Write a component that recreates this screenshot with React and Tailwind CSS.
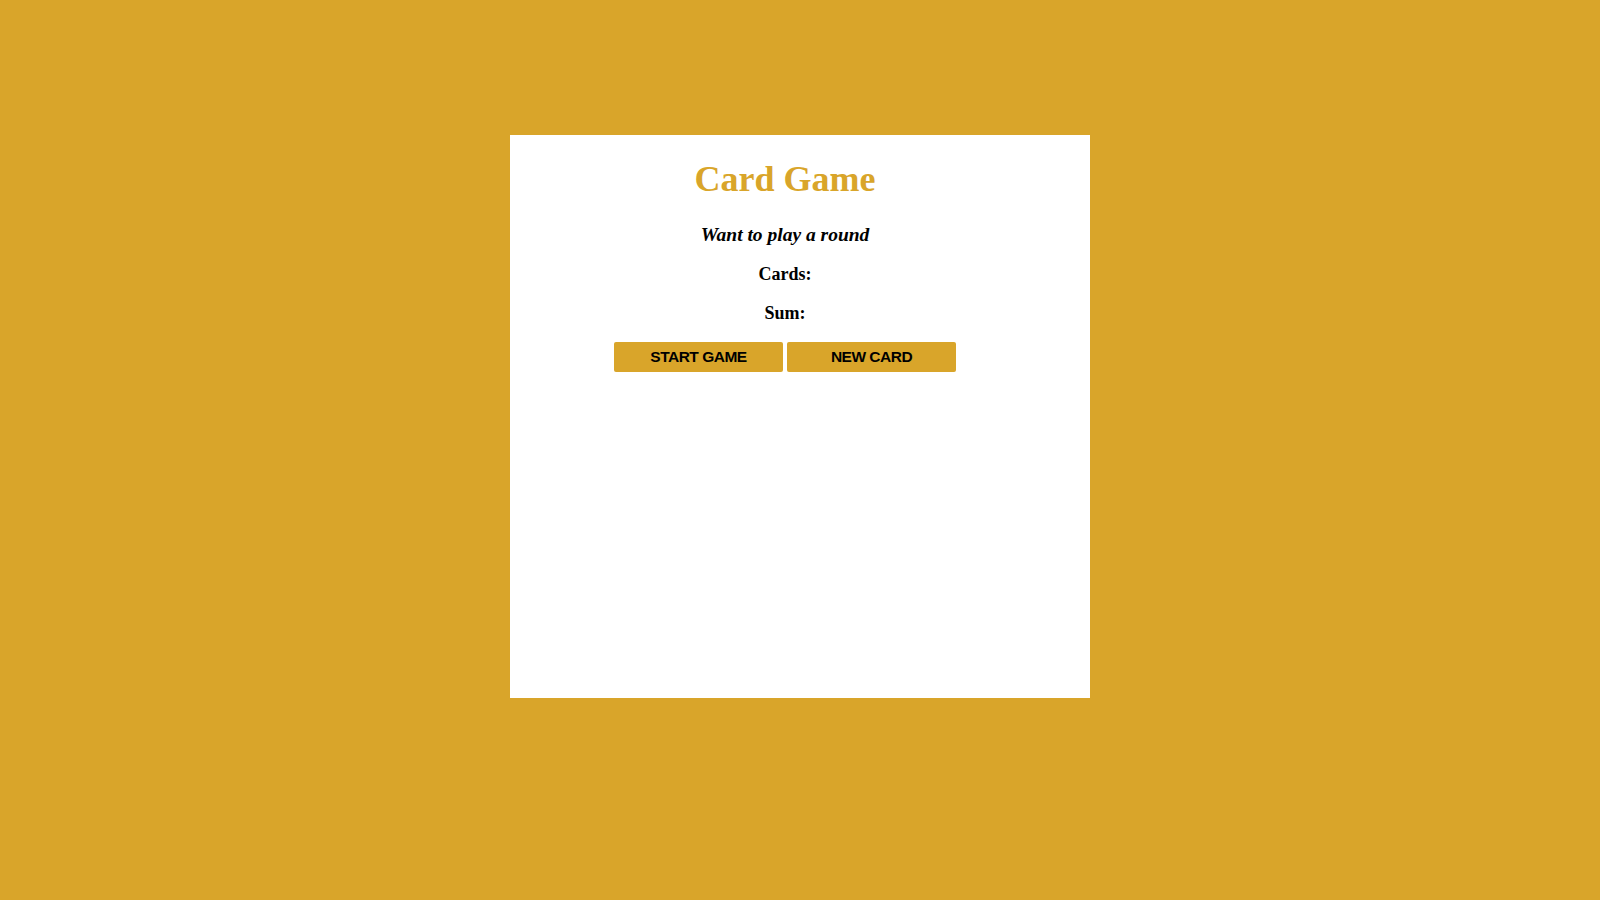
export default function App() {
  const serif = "font-['Liberation_Serif','Times_New_Roman',serif]"

  return (
    <div className="min-h-screen w-full bg-[#d9a52a] pt-[135px]">
      <main className={`mx-auto h-[563px] w-[580px] bg-white pr-[30px] pt-[26px] text-center ${serif}`}>
        <h1 className="text-[36px] font-bold leading-none text-[#d9a52a]">Card Game</h1>
        <p className="mt-[28px] text-[19.5px] font-bold italic leading-none text-black">Want to play a round</p>
        <p className="mt-[20px] text-[18px] font-bold leading-none text-black">Cards:</p>
        <p className="mt-[21px] text-[18px] font-bold leading-none text-black">Sum:</p>

        <div className="mt-[20px] flex justify-center gap-[4px]">
          <button className="h-[30px] w-[169px] rounded-[2px] bg-[#d9a52a] font-['Liberation_Sans',Arial,sans-serif] text-[15.5px] font-bold tracking-[-0.5px] text-black">
            START GAME
          </button>
          <button className="h-[30px] w-[169px] rounded-[2px] bg-[#d9a52a] font-['Liberation_Sans',Arial,sans-serif] text-[15.5px] font-bold tracking-[-0.5px] text-black">
            NEW CARD
          </button>
        </div>
      </main>
    </div>
  )
}
